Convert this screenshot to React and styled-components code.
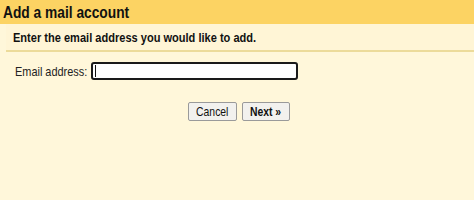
import React, { useState } from "react";
import styled, { createGlobalStyle } from "styled-components";

const GlobalStyle = createGlobalStyle`
  html, body {
    margin: 0;
    padding: 0;
    background: #fff7da;
  }
  body {
    font-family: "Liberation Sans", Arial, sans-serif;
  }
`;

function App() {
  const [email, setEmail] = useState("");

  return (
    <Page>
      <GlobalStyle />
      <TitleBar>
        <Squeeze x={0.86}>Add a mail account</Squeeze>
      </TitleBar>
      <Intro>
        <Squeeze x={0.85}>Enter the email address you would like to add.</Squeeze>
      </Intro>
      <Form onSubmit={(e) => e.preventDefault()}>
        <FieldRow>
          <Label htmlFor="email">
            <Squeeze x={0.84}>Email address:</Squeeze>
          </Label>
          <InputWrap>
            <Input
              id="email"
              value={email}
              onChange={(e) => setEmail(e.target.value)}
            />
            {email === "" && <Caret />}
          </InputWrap>
        </FieldRow>
        <Buttons>
          <Button type="button">
            <Squeeze x={0.8} center>Cancel</Squeeze>
          </Button>
          <Button type="submit" primary>
            <Squeeze x={0.8} center>Next »</Squeeze>
          </Button>
        </Buttons>
      </Form>
    </Page>
  );
}

export default App;

const Page = styled.div`
  width: 474px;
  height: 200px;
  background: #fff7da;
  color: #000;
  overflow: hidden;
`;

// the source screenshot is squashed sideways, so text is narrowed to match
const Squeeze = styled.span`
  display: inline-block;
  white-space: nowrap;
  transform: scaleX(${(p) => p.x});
  transform-origin: ${(p) => (p.center ? "center" : "left")} center;
`;

const TitleBar = styled.h1`
  margin: 0;
  height: 24px;
  padding: 0 0 0 3px;
  background: #fcd363;
  font-size: 16px;
  font-weight: bold;
  line-height: 25px;
  color: #111;
`;

const Intro = styled.div`
  height: 26px;
  margin-left: 6px;
  padding-left: 7px;
  background: #fff5d6;
  border-bottom: 2px solid #ecdb9a;
  font-size: 13px;
  font-weight: bold;
  line-height: 27px;
  color: #111;
`;

const Form = styled.form`
  padding: 10px 0 0 15px;
`;

const FieldRow = styled.div`
  display: flex;
  align-items: center;
  gap: 4px;
`;

const Label = styled.label`
  width: 72px;
  font-size: 13px;
  color: #222;
`;

const InputWrap = styled.div`
  position: relative;
  display: flex;
`;

const Input = styled.input`
  box-sizing: border-box;
  width: 207px;
  height: 18px;
  margin: 0;
  padding: 0 3px;
  border: 2px solid #1a1a1a;
  border-radius: 3px;
  background: #fff;
  font-family: inherit;
  font-size: 13px;
  outline: none;
`;

const Caret = styled.span`
  position: absolute;
  left: 4px;
  top: 3px;
  width: 1px;
  height: 12px;
  background: #111;
  pointer-events: none;
`;

const Buttons = styled.div`
  display: flex;
  justify-content: center;
  gap: 5px;
  margin: 22px 0 0 -15px;
  padding-left: 4px;
`;

const Button = styled.button`
  box-sizing: border-box;
  display: flex;
  align-items: center;
  justify-content: center;
  width: ${(p) => (p.primary ? "48px" : "49px")};
  height: 19px;
  padding: 0;
  border: 1px solid #9a9a9a;
  border-radius: 2px;
  background: #f2f1ee;
  font-family: "Liberation Sans", Arial, sans-serif;
  font-size: 13px;
  font-weight: ${(p) => (p.primary ? "bold" : "normal")};
  color: #111;
  line-height: 17px;
  overflow: visible;
`;
